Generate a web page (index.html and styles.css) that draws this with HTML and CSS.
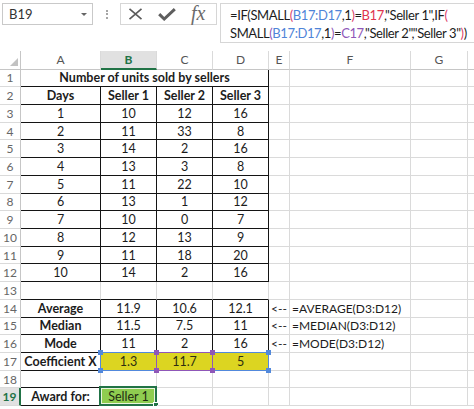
FILE: index.html
```html
<!DOCTYPE html>
<html>
<head>
<meta charset="utf-8">
<link rel="stylesheet" href="styles.css">
</head>
<body>
<div class="fbar">
  <div class="namebox"><span>B19</span><span class="nb-arrow"></span></div>
  <div class="grip"><i></i><i></i><i></i></div>
  <div class="fbtns">
    <svg width="15" height="12" viewBox="0 0 15 12"><path d="M1.5 0.8 L13.5 11.2 M13.5 0.8 L1.5 11.2" stroke="#5a5a5a" stroke-width="1.6" fill="none"/></svg>
    <svg width="18" height="13" viewBox="0 0 18 13"><path d="M1.2 6.2 L6.2 11 L16.8 1.2" stroke="#5e5e5e" stroke-width="3" fill="none" stroke-linejoin="miter"/></svg>
    <span class="fx">fx</span>
  </div>
  <div class="formula">
    <div>=IF(SMALL<span class="p2">(</span><span class="rb">B17:D17</span>,1<span class="p2">)</span>=<span class="rr">B17</span>,"Seller 1",IF<span class="p2">(</span></div>
    <div>SMALL<span class="p3">(</span><span class="rb">B17:D17</span>,1<span class="p3">)</span>=<span class="rp">C17</span>,"Seller 2","Seller 3"<span class="p2">)</span>)</div>
  </div>
</div>
<div class="sheet">
  <div class="corner"><span class="tri"></span></div><div class="ch">A</div><div class="ch sel">B</div><div class="ch">C</div><div class="ch">D</div><div class="ch">E</div><div class="ch">F</div><div class="ch">G</div><div class="ch"></div>

  <div class="rh">1</div><div class="title b">Number of units sold by sellers</div><div></div><div></div><div></div><div></div>
  <div class="rh">2</div><div class="t b">Days</div><div class="t b">Seller 1</div><div class="t b">Seller 2</div><div class="t b">Seller 3</div><div></div><div></div><div></div><div></div>
  <div class="rh">3</div><div class="t">1</div><div class="t">10</div><div class="t">12</div><div class="t">16</div><div></div><div></div><div></div><div></div>
  <div class="rh">4</div><div class="t">2</div><div class="t">11</div><div class="t">33</div><div class="t">8</div><div></div><div></div><div></div><div></div>
  <div class="rh">5</div><div class="t">3</div><div class="t">14</div><div class="t">2</div><div class="t">16</div><div></div><div></div><div></div><div></div>
  <div class="rh">6</div><div class="t">4</div><div class="t">13</div><div class="t">3</div><div class="t">8</div><div></div><div></div><div></div><div></div>
  <div class="rh">7</div><div class="t">5</div><div class="t">11</div><div class="t">22</div><div class="t">10</div><div></div><div></div><div></div><div></div>
  <div class="rh">8</div><div class="t">6</div><div class="t">13</div><div class="t">1</div><div class="t">12</div><div></div><div></div><div></div><div></div>
  <div class="rh">9</div><div class="t">7</div><div class="t">10</div><div class="t">0</div><div class="t">7</div><div></div><div></div><div></div><div></div>
  <div class="rh">10</div><div class="t">8</div><div class="t">12</div><div class="t">13</div><div class="t">9</div><div></div><div></div><div></div><div></div>
  <div class="rh">11</div><div class="t">9</div><div class="t">11</div><div class="t">18</div><div class="t">20</div><div></div><div></div><div></div><div></div>
  <div class="rh">12</div><div class="t">10</div><div class="t">14</div><div class="t">2</div><div class="t">16</div><div></div><div></div><div></div><div></div>
  <div class="rh">13</div><div class="bb"></div><div class="bb"></div><div class="bb"></div><div class="bb"></div><div></div><div></div><div></div><div></div>
  <div class="rh">14</div><div class="t b">Average</div><div class="t">11.9</div><div class="t">10.6</div><div class="t">12.1</div><div class="l">&lt;--</div><div class="l">=AVERAGE(D3:D12)</div><div></div><div></div>
  <div class="rh">15</div><div class="t b">Median</div><div class="t">11.5</div><div class="t">7.5</div><div class="t">11</div><div class="l">&lt;--</div><div class="l">=MEDIAN(D3:D12)</div><div></div><div></div>
  <div class="rh">16</div><div class="t b">Mode</div><div class="t">11</div><div class="t">2</div><div class="t">16</div><div class="l">&lt;--</div><div class="l">=MODE(D3:D12)</div><div></div><div></div>
  <div class="rh">17</div><div class="t b">Coefficient X</div>
    <div class="y"><span class="ov ov-b1"><i class="h hb tl"></i><i class="h hb bl"></i></span>1.3</div>
    <div class="y"><span class="ov ov-p"><i class="h hp tl"></i><i class="h hp tr"></i><i class="h hp bl"></i><i class="h hp br"></i></span>11.7</div>
    <div class="y"><span class="ov ov-b3"><i class="h hb tr"></i><i class="h hb br"></i></span>5</div>
    <div></div><div></div><div></div><div></div>
  <div class="rh">18</div><div class="bb"></div><div></div><div></div><div></div><div></div><div></div><div></div><div></div>
  <div class="rh sel">19</div><div class="t b">Award for:</div><div class="g"><span class="selbox"><i class="fill"></i></span>Seller 1</div><div></div><div></div><div></div><div></div><div></div><div></div>
</div>
</body>
</html>
```

FILE: styles.css
```css
* { box-sizing: border-box; margin: 0; padding: 0; }
html, body { width: 474px; height: 409px; overflow: hidden; background: #fff; }
body { font-family: Lato, "Open Sans", sans-serif; color: #1c1c1c; }

.fbar { height: 51px; display: flex; align-items: flex-start; padding-top: 3px; }
.namebox { margin-left: 2px; width: 91px; height: 22px; border: 1px solid #c9c9c9; display: flex; align-items: center; justify-content: space-between; padding: 0 5px 0 6px; font-size: 13px; color: #333; flex: none; }
.nb-arrow { width: 0; height: 0; border-left: 3px solid transparent; border-right: 3px solid transparent; border-top: 3px solid #666; }
.grip { width: 27px; height: 22px; display: flex; flex-direction: column; align-items: center; justify-content: center; gap: 1.5px; flex: none; }
.grip i { display: block; width: 2px; height: 2px; background: #a6a6a6; }
.fbtns { width: 97px; height: 22px; border: 1px solid #d6d6d6; display: flex; align-items: center; padding-left: 7px; gap: 15px; flex: none; }
.fbtns svg { display: block; }
.fx { font-family: "Liberation Serif", serif; font-style: italic; font-size: 20px; color: #6b6b6b; line-height: 1; margin-top: -2px; }
.formula { margin-left: 3px; flex: 1; min-width: 0; height: 40px; border: 1px solid #d6d6d6; border-right: none; padding: 2px 0 0 9px; font-size: 13px; letter-spacing: -0.4px; line-height: 18px; white-space: nowrap; color: #1c1c1c; overflow: hidden; }
.rb { color: #4f84d8; }
.rr { color: #e0354f; }
.rp { color: #8f57b8; }
.p2 { color: #dc3f6c; }
.p3 { color: #8f57b8; }

.sheet { display: grid; grid-template-columns: 21px 80px 56px 56px 56px 21px 121px 57px 40px; grid-template-rows: 18.5px repeat(19, 17.72px); width: 474px; overflow: hidden; }
.sheet > div { border-right: 1px solid #dadada; border-bottom: 1px solid #dadada; display: flex; align-items: center; justify-content: center; font-size: 12.5px; white-space: nowrap; position: relative; }

.corner { border-color: #c6c6c6 !important; }
.tri { position: absolute; right: 2px; bottom: 3px; width: 0; height: 0; border-left: 8px solid transparent; border-bottom: 8px solid #c2c2c2; }
.sheet > .ch { font-size: 12px; color: #555; border-bottom-color: #c6c6c6; }
.sheet > .ch.sel { background: #e1e1e1; color: #217346; font-weight: 700; border-bottom: 2px solid #217346; }
.sheet > .rh { font-size: 12px; color: #666; border-right-color: #c6c6c6; }
.sheet > .rh.sel { background: #e1e1e1; color: #217346; font-weight: 700; border-right: 2px solid #217346; }

.sheet > .title { grid-column: span 4; border-right-color: #141414; border-bottom-color: #141414; }
.sheet > .t { border-right-color: #141414; border-bottom-color: #141414; }
.sheet > .bb { border-bottom-color: #141414; }
.b { font-weight: 700; }
.sheet > .l { justify-content: flex-start; padding-left: 2px; overflow: visible; font-size: 12px; }

.sheet > .y { background: #dcd521; color: #2e2e10; }
.ov { position: absolute; top: -1px; bottom: -1px; border: 1px solid #5289dc; }
.ov-b1 { left: -1px; right: 0; border-right: none; }
.ov-b3 { left: 0; right: -1px; border-left: none; }
.ov-p { left: -1px; right: -1px; border-color: #8f57b8; z-index: 2; }
.h { position: absolute; width: 5px; height: 5px; z-index: 3; }
.hb { background: #5289dc; }
.hp { background: #8f57b8; }
.tl { left: -3px; top: -3px; }
.bl { left: -3px; bottom: -3px; }
.tr { right: -3px; top: -3px; }
.br { right: -3px; bottom: -3px; }

.sheet > .g { background: #8fcd50; color: #1d2a10; }
.selbox { position: absolute; top: -2px; left: -2px; right: -1px; bottom: -1px; border: 2px solid #217346; box-shadow: inset 0 0 0 1px #e9f5dc; }
.fill { position: absolute; right: -4px; bottom: -4px; width: 6px; height: 6px; background: #217346; border: 1px solid #fff; }
```
